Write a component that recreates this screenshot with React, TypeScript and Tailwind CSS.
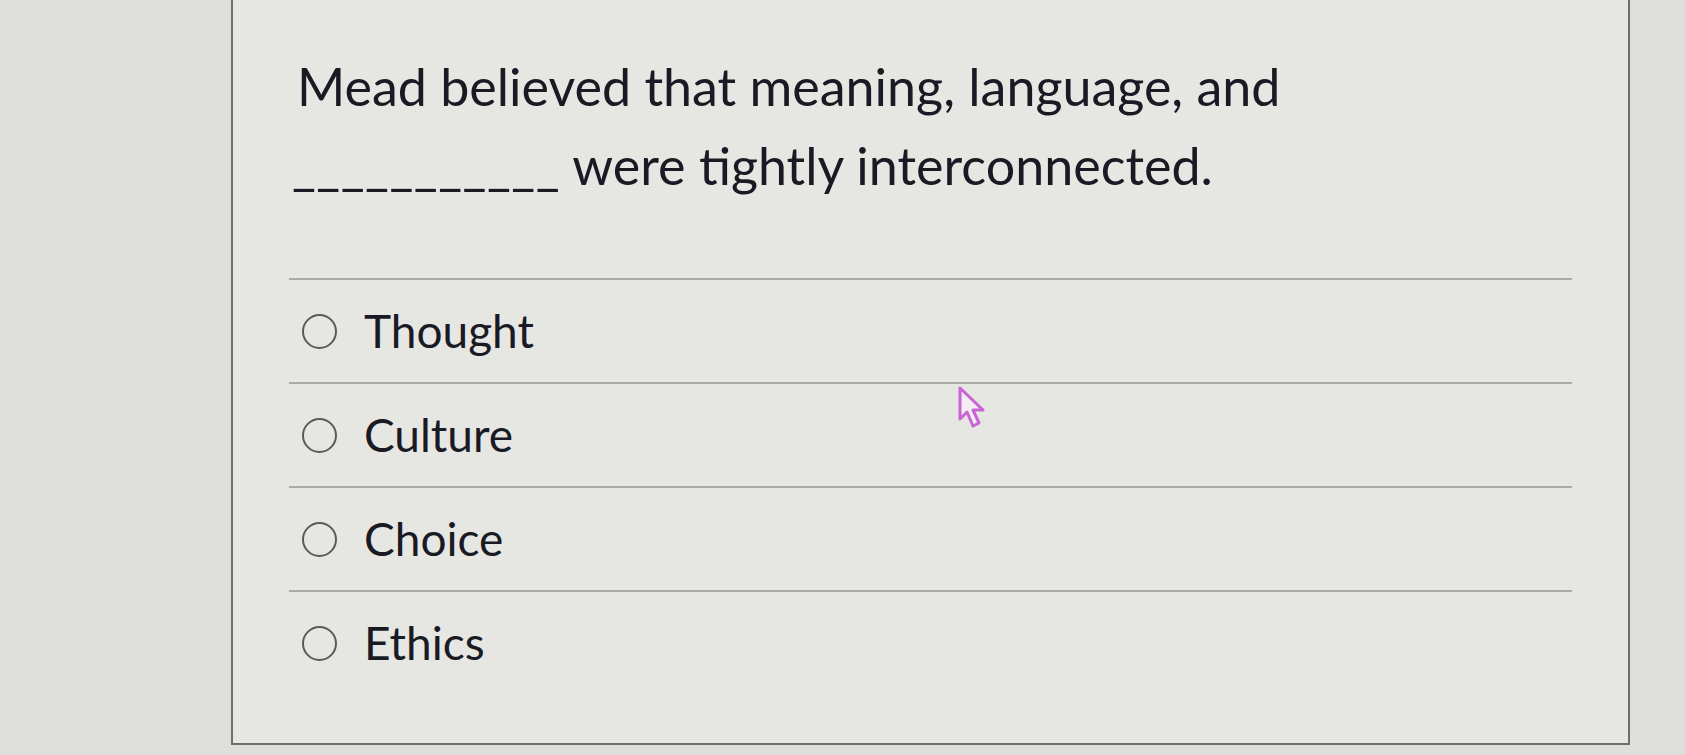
import React from 'react';

const options = ['Thought', 'Culture', 'Choice', 'Ethics'];

function Cursor() {
  return (
    <svg
      className="absolute left-[957px] top-[385px]"
      width="32"
      height="46"
      viewBox="0 0 32 46"
    >
      <path
        d="M3 3 L3 34 L10 27 L16 41 L22 38 L16 25 L26 25 Z"
        fill="#f4eef4"
        stroke="#c765d2"
        strokeWidth="3"
        strokeLinejoin="round"
      />
    </svg>
  );
}

function App() {
  return (
    <div className="relative h-[755px] w-full overflow-hidden bg-[#dededb] font-['Lato','Open_Sans',sans-serif] text-[#1a1a24]">
      <div className="ml-[231px] h-[745px] w-[1399px] border-b-2 border-l-2 border-r-2 border-[#6e6e6e] bg-[#e6e6e3]">
        <p className="pl-[64px] pt-[47px] text-[52px] leading-[79px]">
          Mead believed that meaning, language, and
          <br />
          <span className="-ml-[5px] tracking-[0.5px]">___________</span> were tightly interconnected.
        </p>

        <ul className="mx-[56px] mt-[73px]">
          {options.map((opt) => (
            <li
              key={opt}
              className="flex h-[104px] items-center border-t-2 border-[#a9a9a7] pl-[13px]"
            >
              <span className="h-[35px] w-[35px] rounded-full border-2 border-[#5a5a5a]" />
              <span className="ml-[27px] text-[46px] leading-none">{opt}</span>
            </li>
          ))}
        </ul>
      </div>
      <Cursor />
    </div>
  );
}

export default App;
